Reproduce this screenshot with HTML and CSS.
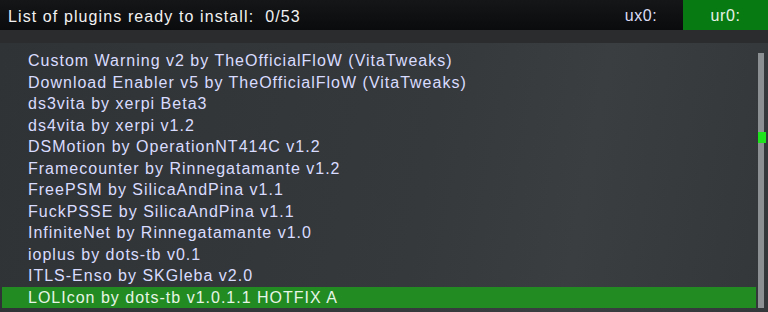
FILE: index.html
```html
<!DOCTYPE html>
<html>
<head>
<meta charset="utf-8">
<link rel="stylesheet" href="styles.css">
</head>
<body>
<div class="screen">
  <header class="topbar">
    <div class="title">List of plugins ready to install:&nbsp; 0/53</div>
    <div class="tabs">
      <div class="tab">ux0:</div>
      <div class="tab active">ur0:</div>
    </div>
  </header>
  <div class="band"></div>
  <main class="panel">
    <ul class="list">
      <li>Custom Warning v2 by TheOfficialFloW (VitaTweaks)</li>
      <li>Download Enabler v5 by TheOfficialFloW (VitaTweaks)</li>
      <li>ds3vita by xerpi Beta3</li>
      <li>ds4vita by xerpi v1.2</li>
      <li>DSMotion by OperationNT414C v1.2</li>
      <li>Framecounter by Rinnegatamante v1.2</li>
      <li>FreePSM by SilicaAndPina v1.1</li>
      <li>FuckPSSE by SilicaAndPina v1.1</li>
      <li>InfiniteNet by Rinnegatamante v1.0</li>
      <li>ioplus by dots-tb v0.1</li>
      <li>ITLS-Enso by SKGleba v2.0</li>
      <li class="selected">LOLIcon by dots-tb v1.0.1.1 HOTFIX A</li>
    </ul>
    <div class="scrollbar"><div class="thumb"></div></div>
  </main>
</div>
</body>
</html>
```
FILE: styles.css
```css
* { box-sizing: border-box; }
html, body { margin: 0; padding: 0; }
body {
  width: 768px;
  height: 312px;
  overflow: hidden;
  background: #2f3235;
  font-family: "Liberation Sans", Arial, sans-serif;
}
.screen {
  display: flex;
  flex-direction: column;
  height: 312px;
}
.topbar {
  height: 30px;
  display: flex;
  justify-content: space-between;
  align-items: stretch;
  background: linear-gradient(#141618, #0a0b0c);
  color: #f2f2f2;
  font-size: 16px;
  letter-spacing: 1.1px;
}
.title {
  display: flex;
  align-items: center;
  padding: 3px 0 0 8px;
}
.tabs { display: flex; }
.tab {
  display: flex;
  align-items: center;
  justify-content: center;
  padding-top: 2px;
  width: 84px;
  color: #dcdcf6;
  letter-spacing: 0.6px;
}
.tab.active {
  width: 85px;
  background: #077a11;
  color: #e8f2e8;
}
.band {
  height: 13px;
  background: #2a2c2e;
}
.panel {
  flex: 1;
  display: flex;
  background: linear-gradient(100deg, #303336 0%, #35393c 55%, #3a3e41 75%, #33373a 100%);
  padding: 7px 2px 4px 2px;
}
.list {
  list-style: none;
  margin: 0;
  padding: 0;
  flex: 1;
}
.list li {
  height: 21.5px;
  line-height: 22.5px;
  padding-left: 26px;
  color: #d9dcff;
  font-size: 16px;
  letter-spacing: 1px;
  white-space: nowrap;
}
.list li.selected {
  background: #228b22;
  color: #e6f5e6;
  margin-right: 2px;
}
.scrollbar {
  width: 6px;
  margin: 3px 2px 0 0;
  background: #8d9092;
  position: relative;
}
.thumb {
  position: absolute;
  left: 0;
  top: 79px;
  width: 8px;
  height: 11px;
  background: #1ee41e;
}
```
